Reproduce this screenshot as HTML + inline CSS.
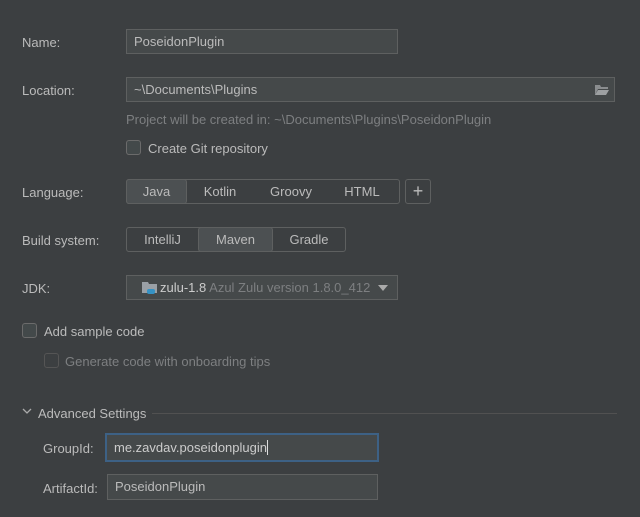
<html><head><style>
body{margin:0;width:640px;height:517px;background:#3c3f41;font-family:"Liberation Sans",sans-serif;font-size:13px;color:#bbbbbb;position:relative;overflow:hidden}
.a{position:absolute;white-space:nowrap}
.f{position:absolute;background:#45494a;border:1px solid #5e6060;box-sizing:border-box;padding-left:7px;line-height:23px;color:#bbb}
.cb{position:absolute;width:15px;height:15px;border:1px solid #6b6b6b;border-radius:3px;box-sizing:border-box;background:#43494a}
.seg{position:absolute;border:1px solid #5e6060;border-radius:3px;box-sizing:border-box;display:flex;height:25px}
.seg div{line-height:23px;text-align:center;box-sizing:border-box}
.sel{background:#4c5052;border:1px solid #5e6060;margin:-1px 0;line-height:23px!important;border-radius:3px}
</style></head><body>
<div class="a" style="left:22px;top:35px">Name:</div>
<div class="f" style="left:126px;top:29px;width:272px;height:25px">PoseidonPlugin</div>
<div class="a" style="left:22px;top:83px">Location:</div>
<div class="f" style="left:126px;top:77px;width:489px;height:25px">~\Documents\Plugins
<svg style="position:absolute;right:4px;top:5px" width="16" height="13" viewBox="0 0 16 13"><path d="M1 2h5l1 2h7v2H4L1 12z" fill="#8a8d8f"/><path d="M4 7h11l-3 5H1z" fill="#9da0a2"/></svg></div>
<div class="a" style="left:126px;top:112px;color:#7d7f81">Project will be created in: ~\Documents\Plugins\PoseidonPlugin</div>
<div class="cb" style="left:126px;top:140px"></div>
<div class="a" style="left:148px;top:141px">Create Git repository</div>
<div class="a" style="left:22px;top:185px">Language:</div>
<div class="seg" style="left:126px;top:179px;width:274px">
<div class="sel" style="width:61px;margin-left:-1px">Java</div><div style="width:66px">Kotlin</div><div style="width:76px">Groovy</div><div style="width:66px">HTML</div></div>
<div class="seg" style="left:405px;top:179px;width:26px;justify-content:center;font-size:18px;line-height:22px">+</div>
<div class="a" style="left:22px;top:233px">Build system:</div>
<div class="seg" style="left:126px;top:227px;width:220px">
<div style="width:71px">IntelliJ</div><div class="sel" style="width:75px">Maven</div><div style="width:72px">Gradle</div></div>
<div class="a" style="left:22px;top:281px">JDK:</div>
<div class="f" style="left:126px;top:275px;width:272px;height:25px;padding-left:14px">
<svg style="position:absolute;left:15px;top:5px" width="16" height="15" viewBox="0 0 16 15"><path d="M0 1h6l1 2h8v9H0z" fill="#9aa0a6"/><rect x="5" y="8" width="8" height="5" rx="2" fill="#3592c4"/></svg>
<span style="margin-left:19px;color:#ccc">zulu-1.8</span> <span style="color:#7d7f81">Azul Zulu version 1.8.0_412</span>
<svg style="position:absolute;right:9px;top:9px" width="10" height="6"><path d="M0 0h10L5 6z" fill="#aaa"/></svg></div>
<div class="cb" style="left:22px;top:323px"></div>
<div class="a" style="left:44px;top:324px">Add sample code</div>
<div class="cb" style="left:44px;top:353px;border-color:#555;background:#3c3f41"></div>
<div class="a" style="left:65px;top:354px;color:#7d7f81">Generate code with onboarding tips</div>
<svg style="position:absolute;left:22px;top:408px" width="10" height="7"><path d="M1 1l4 4 4-4" stroke="#aaa" fill="none" stroke-width="1.3"/></svg>
<div class="a" style="left:38px;top:406px">Advanced Settings</div>
<div class="a" style="left:152px;top:413px;width:465px;height:1px;background:#515151"></div>
<div class="a" style="left:43px;top:441px">GroupId:</div>
<div class="f" style="left:105px;top:433px;width:274px;height:29px;border:2px solid #3d6185;line-height:25px;padding-left:7px;color:#ccc">me.zavdav.poseidonplugin<span style="border-left:1px solid #ddd;margin-left:0"> </span></div>
<div class="a" style="left:43px;top:481px">ArtifactId:</div>
<div class="f" style="left:107px;top:474px;width:271px;height:26px">PoseidonPlugin</div>
</body></html>
